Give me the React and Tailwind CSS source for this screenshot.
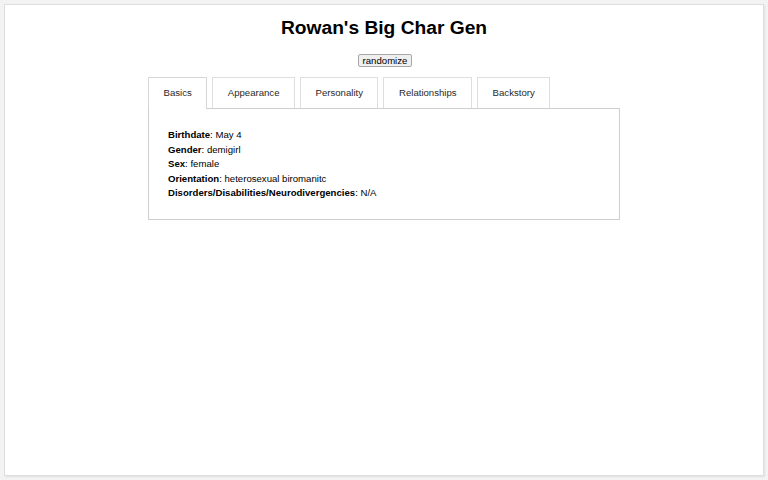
import React from "react";

const tabs = ["Basics", "Appearance", "Personality", "Relationships", "Backstory"];

const rows = [
  ["Birthdate", "May 4"],
  ["Gender", "demigirl"],
  ["Sex", "female"],
  ["Orientation", "heterosexual biromanitc"],
  ["Disorders/Disabilities/Neurodivergencies", "N/A"],
];

export default function App() {
  return (
    <div
      className="w-[768px] h-[480px] bg-[#f3f3f3] p-[4px] overflow-hidden"
      style={{ fontFamily: '"Liberation Sans", Arial, sans-serif' }}
    >
      <div className="h-[472px] w-[760px] bg-white border border-[#dedede] shadow-[1px_1px_2px_rgba(0,0,0,0.08)] pt-[12px] flex flex-col items-center">
        <h1 className="text-[19.2px] leading-[22px] font-bold text-black">Rowan's Big Char Gen</h1>
        <button className="mt-[15px] text-[9.6px] leading-[11px] px-[4px] py-[0px] bg-[#efefef] border border-[#a8a8a8] rounded-[2px] text-black h-[13px] ml-[2px]">
          randomize
        </button>
        <div className="mt-[10px] w-[472px]">
          <div className="flex gap-[5px] relative z-10">
            {tabs.map((t, i) => (
              <div
                key={t}
                className={
                  i === 0
                    ? "h-[32px] -mb-[1px] px-[14.5px] flex items-center border border-b-0 border-[#d6d6d6] bg-white text-[9.6px] text-[#2a2a2a]"
                    : "h-[31px] px-[14.5px] flex items-center border border-b-0 border-[#dedede] bg-white text-[9.6px] text-[#2a2a2a]"
                }
              >
                {t}
              </div>
            ))}
          </div>
          <div className="border border-[#cfcfcf] pl-[19px] pt-[19px] pb-[18px] text-[9.6px] leading-[14.5px] text-black">
            {rows.map(([k, v]) => (
              <div key={k}>
                <span className="font-bold">{k}</span>: {v}
              </div>
            ))}
          </div>
        </div>
      </div>
    </div>
  );
}
